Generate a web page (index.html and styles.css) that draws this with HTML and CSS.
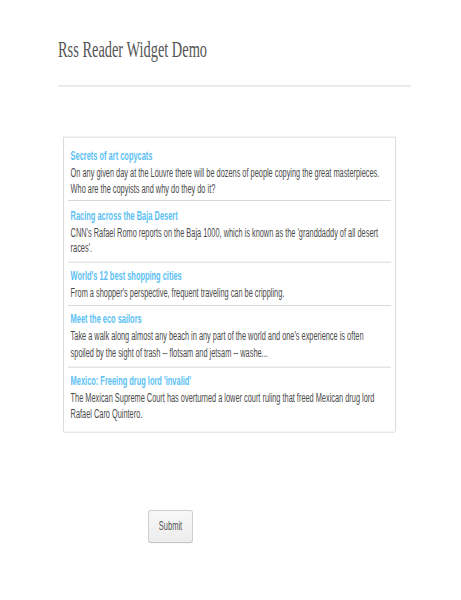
FILE: index.html
```html
<!DOCTYPE html>
<html lang="en">
<head>
<meta charset="utf-8">
<title>Rss Reader Widget Demo</title>
<link rel="stylesheet" href="styles.css">
</head>
<body>
<div class="page">
  <header class="page-header">
    <h1 class="title">Rss Reader Widget Demo</h1>
  </header>
  <hr class="rule">
  <div class="feed">
    <div class="item">
      <a class="item-title" href="#">Secrets of art copycats</a>
      <p class="item-desc">On any given day at the Louvre there will be dozens of people copying the great masterpieces. Who are the copyists and why do they do it?</p>
    </div>
    <div class="item">
      <a class="item-title" href="#">Racing across the Baja Desert</a>
      <p class="item-desc">CNN's Rafael Romo reports on the Baja 1000, which is known as the 'granddaddy of all desert races'.</p>
    </div>
    <div class="item">
      <a class="item-title" href="#">World's 12 best shopping cities</a>
      <p class="item-desc">From a shopper's perspective, frequent traveling can be crippling.</p>
    </div>
    <div class="item">
      <a class="item-title" href="#">Meet the eco sailors</a>
      <p class="item-desc">Take a walk along almost any beach in any part of the world and one's experience is often spoiled by the sight of trash -- flotsam and jetsam -- washe...</p>
    </div>
    <div class="item">
      <a class="item-title" href="#">Mexico: Freeing drug lord 'invalid'</a>
      <p class="item-desc">The Mexican Supreme Court has overturned a lower court ruling that freed Mexican drug lord Rafael Caro Quintero.</p>
    </div>
  </div>
  <div class="actions">
    <button class="btn" type="button">Submit</button>
  </div>
</div>
</body>
</html>
```

FILE: styles.css
```css
html, body {
  margin: 0;
  padding: 0;
  min-height: 600px;
  background: #ffffff;
}

/* The page is drawn at 60% height and stretched vertically,
   which gives the narrow, tall lettering of the reference. */
.page {
  width: 461px;
  min-height: 360px;
  transform: scaleY(1.6667);
  transform-origin: 0 0;
  font-family: "Liberation Sans", Arial, sans-serif;
  color: #4a4a4a;
}

.page-header {
  padding: 20.4px 0 0 58px;
}

.title {
  margin: 0;
  font-family: "Liberation Serif", "Times New Roman", serif;
  font-weight: normal;
  font-size: 14.4px;
  line-height: 18px;
  color: #555;
}

.rule {
  margin: 12.6px 50px 0 58px;
  border: 0;
  height: 0.6px;
  background: #e6e6e6;
}

.feed {
  margin: 30.2px 0 0 63px;
  width: 333px;
  box-sizing: border-box;
  border-left: 1px solid #dcd9e2;
  border-right: 1px solid #dcd9e2;
  background:
    linear-gradient(#dcd9e2, #dcd9e2) left top / 100% 0.6px no-repeat,
    linear-gradient(#dcd9e2, #dcd9e2) left bottom / 100% 0.6px no-repeat;
  padding: 3px 3.6px 3.6px;
}

.item {
  padding: 3.6px 3px 2.4px;
}

.item:not(:last-child) {
  padding-bottom: 3px;
  background: linear-gradient(#d9d6df, #d9d6df) left bottom / 100% 0.6px no-repeat;
}

.item:first-child {
  padding-top: 4.5px;
  padding-bottom: 2.1px;
}

.item-title {
  display: block;
  font-size: 7.44px;
  font-weight: bold;
  line-height: 9.9px;
  color: #5bbff4;
  text-decoration: none;
}

.item-desc {
  margin: 0;
  font-size: 7.38px;
  line-height: 9.9px;
  color: #4a4a4a;
}

.actions {
  margin: 45px 0 0 148px;
}

.btn {
  width: 45px;
  height: 19.2px;
  padding: 0;
  font-family: "Liberation Sans", Arial, sans-serif;
  font-size: 7.5px;
  color: #555;
  background: linear-gradient(#f8f8f8, #ececec);
  border: 0;
  border-left: 1px solid #cfcfcf;
  border-right: 1px solid #cfcfcf;
  box-shadow: inset 0 0.6px 0 #cfcfcf, inset 0 -0.6px 0 #b8b8b8;
  border-radius: 3px / 1.8px;
}
```
